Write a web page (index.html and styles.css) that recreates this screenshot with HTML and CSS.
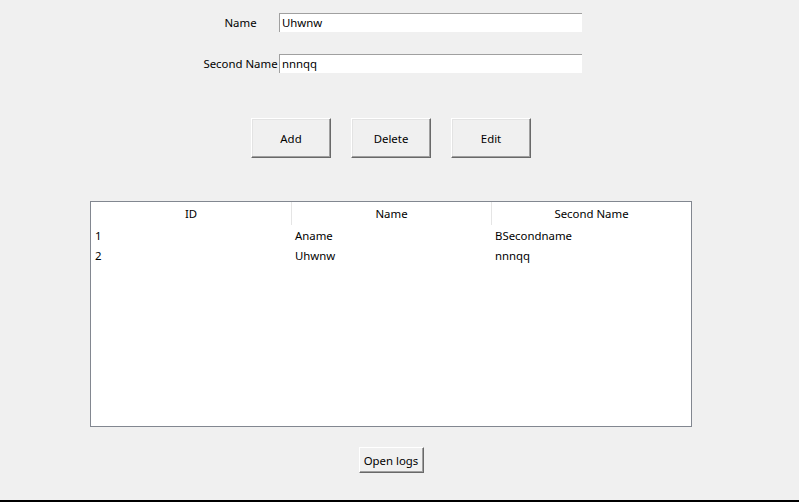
FILE: index.html
```html
<!DOCTYPE html>
<html>
<head>
<meta charset="utf-8">
<link rel="stylesheet" href="styles.css">
</head>
<body>
<div class="window">
  <div class="form">
    <div class="label">Name</div>
    <div class="entry">Uhwnw</div>
    <div class="label">Second Name</div>
    <div class="entry">nnnqq</div>
  </div>
  <div class="actions">
    <button class="btn">Add</button>
    <button class="btn">Delete</button>
    <button class="btn">Edit</button>
  </div>
  <div class="table">
    <div class="thead">
      <div class="th">ID</div>
      <div class="th">Name</div>
      <div class="th">Second Name</div>
    </div>
    <div class="tbody">
      <div class="tr">
        <div class="td">1</div>
        <div class="td">Aname</div>
        <div class="td">BSecondname</div>
      </div>
      <div class="tr">
        <div class="td">2</div>
        <div class="td">Uhwnw</div>
        <div class="td">nnnqq</div>
      </div>
    </div>
  </div>
  <button class="btn small">Open logs</button>
</div>
</body>
</html>
```
FILE: styles.css
```css
html, body {
  margin: 0;
  padding: 0;
}
body {
  width: 799px;
  height: 502px;
  background: #f0f0f0;
  font-family: "Noto Sans", "Open Sans", sans-serif;
  font-size: 11.4px;
  color: #000;
  box-sizing: border-box;
  border-bottom: 2px solid #000;
  overflow: hidden;
}
.window {
  width: 782px;
  display: flex;
  flex-direction: column;
  align-items: center;
}
.form {
  margin-top: 13px;
  margin-left: 2px;
  display: grid;
  grid-template-columns: 77px 303px;
  grid-auto-rows: 19px;
  row-gap: 22px;
  align-items: center;
}
.label {
  text-align: center;
  white-space: nowrap;
  height: 19px;
  line-height: 19px;
}
.entry {
  height: 19px;
  box-sizing: border-box;
  background: #fff;
  border-top: 1px solid #a0a0a0;
  border-left: 1px solid #a0a0a0;
  padding-left: 2px;
  line-height: 18px;
}
.actions {
  margin-top: 45px;
  display: flex;
  gap: 20px;
}
.btn {
  font: inherit;
  color: #000;
  background: #f0f0f0;
  width: 80px;
  height: 40px;
  box-sizing: border-box;
  padding: 0;
  padding-top: 1px;
  border: 1px solid;
  border-color: #fff #696969 #696969 #fff;
  box-shadow: inset -1px -1px 0 #a0a0a0, inset 1px 1px 0 #e3e3e3;
  cursor: default;
}
.table {
  margin-top: 43px;
  width: 602px;
  height: 226px;
  box-sizing: border-box;
  border: 1px solid #828790;
  background: #fff;
}
.thead, .tr {
  display: grid;
  grid-template-columns: 200px 200px 200px;
}
.th {
  height: 23px;
  line-height: 24px;
  text-align: center;
  border-left: 1px solid #e5e5e5;
}
.th:first-child {
  border-left: none;
}
.tbody {
  padding-top: 1px;
}
.td {
  height: 20px;
  line-height: 20px;
  padding-left: 4px;
}
.small {
  width: 65px;
  height: 26px;
  margin-top: 20px;
  box-shadow: inset -1px -1px 0 #a0a0a0;
}
```
